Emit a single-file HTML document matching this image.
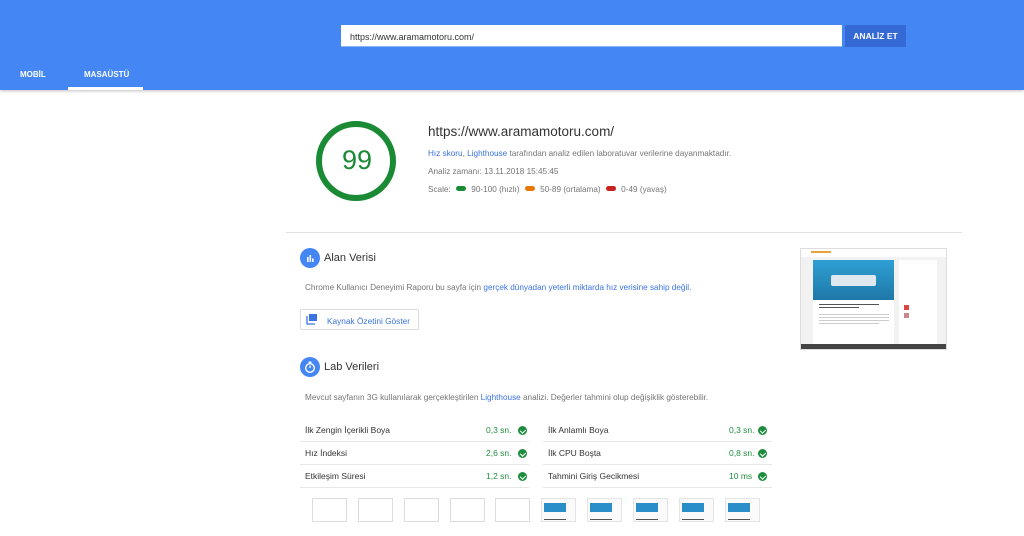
<!DOCTYPE html>
<html><head><meta charset="utf-8"><style>
*{margin:0;padding:0;box-sizing:border-box}
body{width:1024px;height:536px;overflow:hidden;background:#fff;font-family:"Liberation Sans",sans-serif;color:#212121;position:relative}
.hdr{position:absolute;left:0;top:0;width:1024px;height:90px;background:#4386f4;box-shadow:0 1px 3px rgba(0,0,0,.25)}
.inp{position:absolute;left:341px;top:25px;width:501px;height:22px;background:#fff;border-bottom:1px solid #8ab4f8;font-size:9px;color:#333;padding:7px 0 0 9px}
.btn{position:absolute;left:845px;top:25px;width:61px;height:22px;background:#3469d6;color:#fff;font-size:8.5px;font-weight:bold;text-align:center;line-height:22px}
.tab{position:absolute;top:70px;font-size:8px;font-weight:bold;color:#fff}
.ul{position:absolute;left:68px;top:87px;width:75px;height:3px;background:#fff}
.a{position:absolute;white-space:nowrap}
.blue{color:#3b73e0}
.g{color:#757575}
.sep{position:absolute;left:286px;top:232px;width:676px;height:1px;background:#e0e0e0}
.ic{position:absolute;width:20px;height:20px;border-radius:50%;background:#4386f4}
.row{position:absolute;height:23px;border-bottom:1px solid #e6e6e6;font-size:8.5px;color:#333}
.row span{position:absolute;top:6px}
.v{color:#1e8e3e}
.ck{position:absolute;top:7px;width:9px;height:9px;border-radius:50%;background:#1e8e3e}
.ck:after{content:"";position:absolute;left:2.5px;top:1.5px;width:2.5px;height:4px;border:solid #fff;border-width:0 1.3px 1.3px 0;transform:rotate(45deg)}
.fr{position:absolute;top:498px;width:35px;height:24px;border:1px solid #ddd}
.fs{position:absolute;top:498px;width:35px;height:24px;border:1px solid #e4e4e4;background:#fafafa}
.fs i{position:absolute;left:2px;top:4px;width:22px;height:9px;background:#2a8fc8}
.fs b{position:absolute;left:2px;bottom:1px;width:22px;height:1px;background:#555}
.ln{position:absolute;height:1px;background:#ccc}
</style></head><body>
<div class="hdr"></div>
<div class="inp">https://www.aramamotoru.com/</div>
<div class="btn">ANALİZ ET</div>
<div class="tab" style="left:20px">MOBİL</div>
<div class="tab" style="left:84px">MASAÜSTÜ</div>
<div class="ul"></div>

<svg class="a" style="left:315px;top:120px" width="82" height="82"><circle cx="41" cy="41" r="37" fill="none" stroke="#1a8a34" stroke-width="6"/></svg>
<div class="a" style="left:316px;top:145px;width:82px;text-align:center;font-size:27px;color:#1a8a34">99</div>
<div class="a" style="left:428px;top:124px;font-size:13.5px;color:#333">https://www.aramamotoru.com/</div>
<div class="a g" style="left:428px;top:149px;font-size:8.2px"><span class="blue">Hız skoru</span>, <span class="blue">Lighthouse</span> tarafından analiz edilen laboratuvar verilerine dayanmaktadır.</div>
<div class="a g" style="left:428px;top:167px;font-size:8.2px">Analiz zamanı: 13.11.2018 15:45:45</div>
<div class="a g" style="left:428px;top:185px;font-size:8.2px">Scale: <span style="display:inline-block;width:10px;height:5px;border-radius:3px;background:#1a8a34;margin:0 3px 1px 3px"></span> 90-100 (hızlı) <span style="display:inline-block;width:10px;height:5px;border-radius:3px;background:#e67700;margin:0 3px 1px 3px"></span> 50-89 (ortalama) <span style="display:inline-block;width:10px;height:5px;border-radius:3px;background:#c7221f;margin:0 3px 1px 3px"></span> 0-49 (yavaş)</div>
<div class="sep"></div>

<div class="ic" style="left:300px;top:248px"><svg width="20" height="20"><rect x="7" y="9" width="1.6" height="5" fill="#fff"/><rect x="9.5" y="7" width="1.6" height="7" fill="#fff"/><rect x="12" y="10.5" width="1.6" height="3.5" fill="#fff"/></svg></div>
<div class="a" style="left:324px;top:252px;font-size:11px;color:#333">Alan Verisi</div>
<div class="a g" style="left:305px;top:283px;font-size:8.2px">Chrome Kullanıcı Deneyimi Raporu bu sayfa için <span class="blue">gerçek dünyadan yeterli miktarda hız verisine sahip değil</span>.</div>
<div class="a" style="left:300px;top:309px;width:119px;height:21px;border:1px solid #ddd;border-radius:2px;font-size:8.3px;color:#3b73e0;padding:6px 0 0 26px">Kaynak Özetini Göster</div>
<svg class="a" style="left:306px;top:313px" width="12" height="12"><rect x="3" y="1" width="8" height="7" fill="#3b73e0"/><path d="M1 3v8h8" fill="none" stroke="#3b73e0" stroke-width="1.3"/></svg>

<div class="ic" style="left:300px;top:357px"><svg width="20" height="20"><circle cx="10" cy="11" r="4.3" fill="none" stroke="#fff" stroke-width="1.4"/><rect x="8.5" y="4.5" width="3" height="1.4" fill="#fff"/><path d="M10 11V8.5" stroke="#fff" stroke-width="1.3"/></svg></div>
<div class="a" style="left:324px;top:361px;font-size:11px;color:#333">Lab Verileri</div>
<div class="a g" style="left:305px;top:393px;font-size:8.2px">Mevcut sayfanın 3G kullanılarak gerçekleştirilen <span class="blue">Lighthouse</span> analizi. Değerler tahmini olup değişiklik gösterebilir.</div>

<div class="row" style="left:300px;top:419px;width:229px"><span style="left:5px">İlk Zengin İçerikli Boya</span><span class="v" style="left:186px">0,3 sn.</span><i class="ck" style="left:218px"></i></div>
<div class="row" style="left:300px;top:442px;width:229px"><span style="left:5px">Hız İndeksi</span><span class="v" style="left:186px">2,6 sn.</span><i class="ck" style="left:218px"></i></div>
<div class="row" style="left:300px;top:465px;width:229px"><span style="left:5px">Etkileşim Süresi</span><span class="v" style="left:186px">1,2 sn.</span><i class="ck" style="left:218px"></i></div>
<div class="row" style="left:543px;top:419px;width:229px"><span style="left:5px">İlk Anlamlı Boya</span><span class="v" style="left:186px">0,3 sn.</span><i class="ck" style="left:215px"></i></div>
<div class="row" style="left:543px;top:442px;width:229px"><span style="left:5px">İlk CPU Boşta</span><span class="v" style="left:186px">0,8 sn.</span><i class="ck" style="left:215px"></i></div>
<div class="row" style="left:543px;top:465px;width:229px"><span style="left:5px">Tahmini Giriş Gecikmesi</span><span class="v" style="left:186px">10 ms</span><i class="ck" style="left:215px"></i></div>

<div class="fr" style="left:312px"></div><div class="fr" style="left:358px"></div><div class="fr" style="left:404px"></div><div class="fr" style="left:450px"></div><div class="fr" style="left:495px"></div>
<div class="fs" style="left:541px"><i></i><b></b></div><div class="fs" style="left:587px"><i></i><b></b></div><div class="fs" style="left:633px"><i></i><b></b></div><div class="fs" style="left:679px"><i></i><b></b></div><div class="fs" style="left:725px"><i></i><b></b></div>

<div class="a" style="left:800px;top:248px;width:147px;height:102px;border:1px solid #ddd;background:#f2f2f2">
 <div style="position:absolute;left:0;top:0;width:145px;height:8px;background:#fff"></div>
 <div style="position:absolute;left:10px;top:2px;width:20px;height:2px;background:#e8a23a"></div>
 <div style="position:absolute;left:12px;top:11px;width:81px;height:40px;background:linear-gradient(#2f9fd4,#1f78a8)"></div>
 <div style="position:absolute;left:30px;top:26px;width:45px;height:11px;background:#dfe8ee;border-radius:2px"></div>
 <div style="position:absolute;left:12px;top:51px;width:81px;height:46px;background:#fff"></div>
 <div class="ln" style="left:18px;top:55px;width:60px;background:#555"></div>
 <div class="ln" style="left:18px;top:58px;width:40px;background:#555"></div>
 <div class="ln" style="left:18px;top:65px;width:70px"></div>
 <div class="ln" style="left:18px;top:68px;width:70px"></div>
 <div class="ln" style="left:18px;top:71px;width:70px"></div>
 <div class="ln" style="left:18px;top:74px;width:60px"></div>
 <div style="position:absolute;left:98px;top:11px;width:38px;height:86px;background:#fff"></div>
 <div style="position:absolute;left:103px;top:56px;width:5px;height:5px;background:#d44"></div>
 <div style="position:absolute;left:103px;top:64px;width:5px;height:5px;background:#c88"></div>
 <div style="position:absolute;left:0;top:95px;width:145px;height:5px;background:#444"></div>
</div>
</body></html>
